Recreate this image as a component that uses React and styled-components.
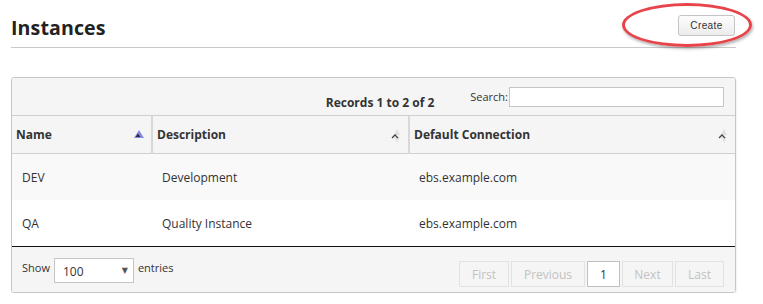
import styled, { createGlobalStyle } from "styled-components";

const GlobalStyle = createGlobalStyle`
  body {
    margin: 0;
    font-family: "Open Sans", "DejaVu Sans", sans-serif;
    color: #333;
    background: #fff;
  }
`;

const Page = styled.div`
  width: 725px;
  padding: 0 11px;
`;

const Header = styled.div`
  display: flex;
  align-items: center;
  justify-content: space-between;
  height: 47px;
  border-bottom: 1px solid #c8c8c8;
`;

const Title = styled.h1`
  margin: 7px 0 0 0;
  font-size: 19.6px;
  font-weight: 700;
  color: #222;
  letter-spacing: 0.1px;
`;

const CreateWrap = styled.div`
  position: relative;
  margin-right: 1px;
  margin-top: 3px;
`;

const Ring = styled.div`
  position: absolute;
  left: -56px;
  top: -12px;
  width: 124px;
  height: 38px;
  border: 3px solid #e8434a;
  border-radius: 50%;
  box-shadow: 1px 2px 3px rgba(0, 0, 0, 0.3);
  pointer-events: none;
`;

const CreateButton = styled.button`
  display: block;
  height: 21px;
  width: 57px;
  padding: 0;
  font-family: "Liberation Sans", Arial, sans-serif;
  font-size: 10px;
  letter-spacing: 0.4px;
  color: #333;
  background: linear-gradient(#fdfdfd, #ececec);
  border: 1px solid #c4c4c4;
  border-radius: 3px;
`;

const Panel = styled.div`
  margin-top: 29px;
  border: 1px solid #c6c6c6;
  border-radius: 3px;
  overflow: hidden;
  box-shadow: 1px 1px 1px rgba(0, 0, 0, 0.05);
`;

const Toolbar = styled.div`
  display: flex;
  align-items: center;
  justify-content: flex-end;
  height: 37px;
  background: #f5f5f5;
  border-bottom: 1px solid #cfcfcf;
  padding-right: 11px;
`;

const Records = styled.div`
  font-size: 12px;
  font-weight: 700;
  color: #333;
  margin-right: 36px;
  margin-top: 11px;
`;

const SearchLabel = styled.label`
  display: flex;
  align-items: center;
  font-size: 11px;
  color: #333;
`;

const SearchInput = styled.input`
  width: 211px;
  height: 16px;
  margin: 0 0 0 1px;
  border: 1px solid #c6c6c6;
  padding: 1px;
  background: #fff;
`;

const Table = styled.table`
  width: 100%;
  border-collapse: collapse;
  font-size: 12px;
`;

const Th = styled.th`
  position: relative;
  text-align: left;
  font-weight: 700;
  font-size: 12px;
  color: #333;
  background: #f5f5f5;
  height: 37px;
  padding: 0 0 0 4px;
  border-left: ${(p) => (p.$first ? "none" : "2px solid #d8d8d8")};
  border-bottom: 1px solid #d0d0d0;
  width: ${(p) => p.$w}px;
`;

const SortIcon = styled.svg`
  position: absolute;
  right: ${(p) => p.$right}px;
  top: 13px;
`;

const Td = styled.td`
  height: 46px;
  padding: 0 0 0 10px;
  color: #333;
  background: ${(p) => (p.$odd ? "#f9f9f9" : "#fff")};
`;

const Tbody = styled.tbody`
  border-bottom: 1px solid #111;
`;

const Footer = styled.div`
  display: flex;
  justify-content: space-between;
  height: 45px;
  background: #f5f5f5;
  padding: 0 11px 0 10px;
`;

const Length = styled.div`
  display: flex;
  align-items: flex-start;
  gap: 4px;
  padding-top: 11px;
  font-size: 11px;
  line-height: 20px;
  color: #333;
`;

const Select = styled.div`
  display: flex;
  align-items: flex-start;
  justify-content: space-between;
  width: 80px;
  height: 25px;
  box-sizing: border-box;
  padding: 4px 5px 0 8px;
  border: 1px solid #c6c6c6;
  background: #fff;
  font-size: 12px;
  line-height: 18px;
  color: #333;
`;

const Caret = styled.span`
  font-size: 8px;
  color: #555;
  line-height: 14px;
`;

const Pager = styled.div`
  display: flex;
  gap: 2px;
  margin-top: 14px;
`;

const PageBtn = styled.span`
  display: flex;
  align-items: center;
  justify-content: center;
  height: 26px;
  width: ${(p) => p.$w}px;
  box-sizing: border-box;
  font-size: 12px;
  color: ${(p) => (p.$current ? "#333" : "#c2c2c2")};
  border: 1px solid ${(p) => (p.$current ? "#c0c0c0" : "#e2e2e2")};
  background: ${(p) => (p.$current ? "#fff" : "#f5f5f5")};
`;

const AscIcon = ({ right }) => (
  <SortIcon $right={right} width="12" height="12" viewBox="0 0 12 12">
    <polygon points="6,1 11,9 1,9" fill="#8a8ae6" />
    <polygon points="3.5,7 6,3.5 8.5,7" fill="#333" transform="translate(-1 1)" />
  </SortIcon>
);

const BothIcon = ({ right }) => (
  <SortIcon $right={right} width="12" height="14" viewBox="0 0 12 14">
    <polygon points="7,0 10,6 4,6" fill="#e0e0e0" />
    <polygon points="4,8 10,8 7,14" fill="#e4e4e4" />
    <polyline points="2,9 5,6 8,9" fill="none" stroke="#444" strokeWidth="1.3" />
  </SortIcon>
);

const rows = [
  { name: "DEV", desc: "Development", conn: "ebs.example.com" },
  { name: "QA", desc: "Quality Instance", conn: "ebs.example.com" },
];

export default function App() {
  return (
    <>
      <GlobalStyle />
      <Page>
        <Header>
          <Title>Instances</Title>
          <CreateWrap>
            <Ring />
            <CreateButton>Create</CreateButton>
          </CreateWrap>
        </Header>
        <Panel>
          <Toolbar>
            <Records>Records 1 to 2 of 2</Records>
            <SearchLabel>
              Search:
              <SearchInput />
            </SearchLabel>
          </Toolbar>
          <Table>
            <thead>
              <tr>
                <Th $first $w={135}>
                  Name
                  <AscIcon right={6} />
                </Th>
                <Th $w={251}>
                  Description
                  <BothIcon right={6} />
                </Th>
                <Th>
                  Default Connection
                  <BothIcon right={6} />
                </Th>
              </tr>
            </thead>
            <Tbody>
              {rows.map((r, i) => (
                <tr key={r.name}>
                  <Td $odd={i % 2 === 0}>{r.name}</Td>
                  <Td $odd={i % 2 === 0}>{r.desc}</Td>
                  <Td $odd={i % 2 === 0}>{r.conn}</Td>
                </tr>
              ))}
            </Tbody>
          </Table>
          <Footer>
            <Length>
              Show
              <Select>
                100
                <Caret>▼</Caret>
              </Select>
              entries
            </Length>
            <Pager>
              <PageBtn $w={50}>First</PageBtn>
              <PageBtn $w={74}>Previous</PageBtn>
              <PageBtn $w={33} $current>1</PageBtn>
              <PageBtn $w={51}>Next</PageBtn>
              <PageBtn $w={49}>Last</PageBtn>
            </Pager>
          </Footer>
        </Panel>
      </Page>
    </>
  );
}
